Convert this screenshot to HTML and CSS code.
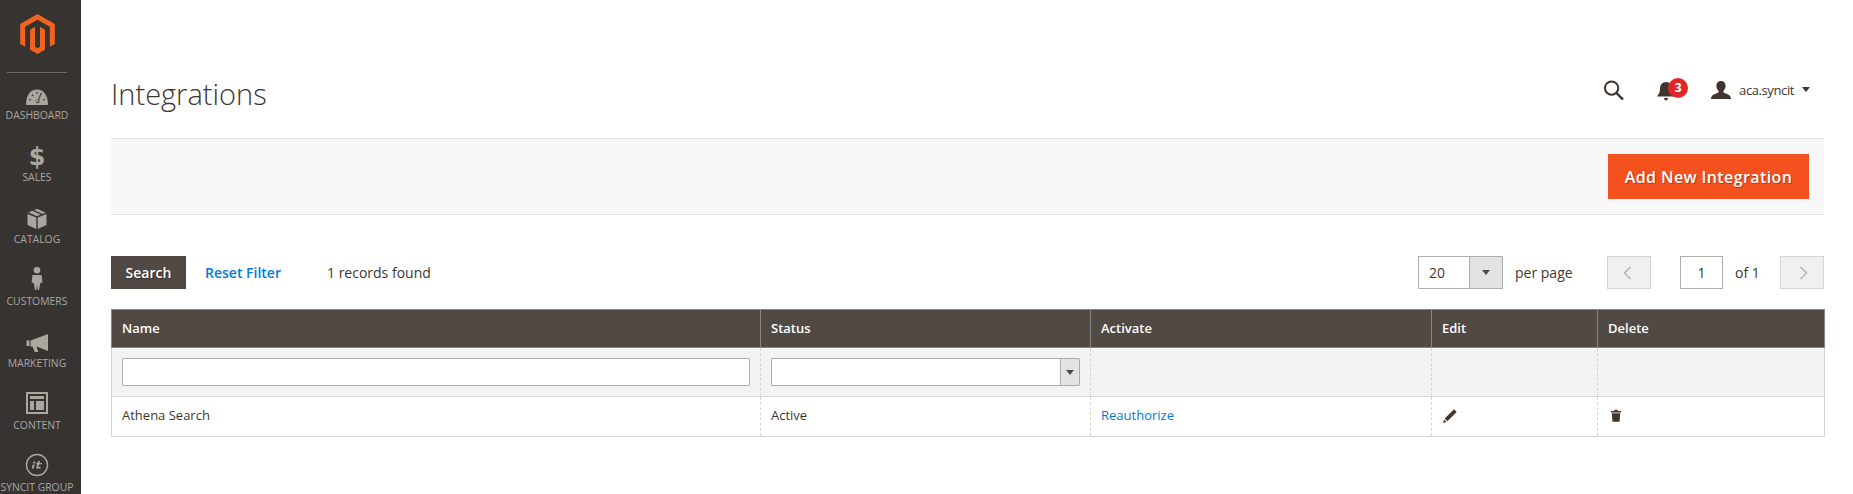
FILE: index.html
```html
<!DOCTYPE html>
<html lang="en">
<head>
<meta charset="utf-8">
<title>Integrations</title>
<link rel="stylesheet" href="styles.css">
</head>
<body>
<div class="app">
  <nav class="sidebar">
    <a class="logo" href="#">
      <svg width="35" height="40" viewBox="1.6 0 20.8 24"><path fill="#f26322" d="M12 24l-4.455-2.572v-12l2.97-1.715v12.001l1.485.902 1.485-.902V7.713l2.971 1.715v12L12 24zM22.391 6v12l-2.969 1.714V7.713L12 3.43 4.574 7.713v12.001L1.609 18V6L12 0l10.391 6z"/></svg>
    </a>
    <ul class="menu">
      <li class="menu-item">
        <svg class="menu-icon" width="24" height="24" viewBox="0 -3.500 24 24"><path fill="#aaa6a0" fill-rule="evenodd" d="M1 19.500C1 11 5.500 5 12 5s11 6 11 14.500c0 .8-.4 1-1 1H2c-.6 0-1-.2-1-1zM4 15.500l2 .5.300-1-2-.6zM6.500 10.500l1.500 1.400.7-.7-1.400-1.500zM11.500 7.500v2h1v-2zM19.800 14.500l-2 .6.300 1 2-.5z"/><path fill="#373330" d="M15.800 8.200l1 .4-2.700 7.200c.7 1 .3 2.300-.6 2.800-1 .5-2.200.2-2.700-.8-.5-1 0-2.200.9-2.600.4-.2.800-.2 1.200-.2z"/><path fill="#aaa6a0" d="M15.600 9.800l-2.500 6c.6.600.5 1.500-.2 1.900-.6.300-1.400.100-1.700-.5-.3-.6 0-1.400.6-1.600.3-.1.500-.1.800 0z"/></svg>
        <span>Dashboard</span>
      </li>
      <li class="menu-item">
        <span class="menu-glyph">$</span>
        <span>Sales</span>
      </li>
      <li class="menu-item">
        <svg class="menu-icon" width="24" height="24" viewBox="0 -1.500 24 24"><path fill="#aaa6a0" d="M2.500 7.500l8.800 3.500v11.500l-8.800-4zM21.500 7.500L12.700 11v11.500l8.800-4zM3.500 6l3.800-1.700 8.500 3.800-3.800 1.700zM9 3.600L12 2.200 20.500 6l-3 1.400z"/></svg>
        <span>Catalog</span>
      </li>
      <li class="menu-item">
        <svg class="menu-icon" width="24" height="24" viewBox="0 1 24 24"><circle cx="12" cy="4.300" r="3.300" fill="#aaa6a0"/><path fill="#aaa6a0" d="M7.500 9h9l1 7.500-2.200.4-1.300 7.100h-1.300l-.7-5-.7 5h-1.300L8.700 16.900l-2.200-.4z"/></svg>
        <span>Customers</span>
      </li>
      <li class="menu-item">
        <svg class="menu-icon" width="24" height="24" viewBox="0 -3 24 24"><path fill="#aaa6a0" d="M1.500 8.500h3v5.500h-3zM5.500 8.500L23 2v17L11.500 14.500l1.800 5.500h-3.600L7.500 14.500h-2z"/></svg>
        <span>Marketing</span>
      </li>
      <li class="menu-item">
        <svg class="menu-icon" width="24" height="24" viewBox="0 0 24 24"><path fill="#aaa6a0" fill-rule="evenodd" d="M1 1h22v22H1zM3 3v18h18V3zM5 5h14v3H5zM5 10h4v9H5zM11 10h8v9h-8z"/></svg>
        <span>Content</span>
      </li>
      <li class="menu-item">
        <svg class="menu-icon" width="24" height="24" viewBox="0 0 24 24"><circle cx="12" cy="12" r="10.500" fill="none" stroke="#aaa6a0" stroke-width="1.400"/><path fill="#aaa6a0" d="M8.500 8.500h2l-.6 2H8zM7.700 11.500h2l-1 4h-2zM13 8h2l-.5 2H17l-.3 1.300h-2.500l-.7 2.700h2.300l-.4 1.500h-4.300l1.100-4.200h-1.300l.3-1.300h1.400z"/></svg>
        <span>Syncit Group</span>
      </li>
    </ul>
  </nav>
  <main class="main">
    <header class="page-head">
      <h1 class="page-title">Integrations</h1>
      <div class="head-tools">
        <svg class="tool-search" width="21" height="20" viewBox="0 0 22 21"><circle cx="9" cy="8.500" r="7" fill="none" stroke="#41362f" stroke-width="2.200"/><path d="M14 13.500l7 7" stroke="#41362f" stroke-width="2.600" fill="none"/></svg>
        <div class="tool-bell">
          <svg width="18" height="20" viewBox="0 0 18 20"><path fill="#41362f" d="M9 1c4 0 6 3 6 7 0 3 1 5 2.500 6.500v1H.5v-1C2 13 3 11 3 8c0-4 2-7 6-7zM7 17h4c0 1.500-.9 2.500-2 2.500S7 18.500 7 17z"/></svg>
          <span class="badge">3</span>
        </div>
        <div class="tool-user">
          <svg width="20" height="18" viewBox="0 0 20 18"><path fill="#41362f" d="M10 0c3 0 4.600 2.300 4.600 5 0 2-.9 3.700-2 4.800-.4.400-.4 1.400.2 1.800 2.200 1.200 7.200 2 7.200 6.400H0c0-4.400 5-5.200 7.200-6.400.6-.4.600-1.400.2-1.800-1.100-1.100-2-2.800-2-4.800C5.400 2.300 7 0 10 0z"/></svg>
          <span class="user-name">aca.syncit</span>
          <span class="caret-user"></span>
        </div>
      </div>
    </header>
    <div class="page-actions">
      <button class="btn-primary" type="button">Add New Integration</button>
    </div>
    <div class="toolbar">
      <div class="toolbar-left">
        <button class="btn-search" type="button">Search</button>
        <a class="link reset" href="#">Reset Filter</a>
        <span class="records">1 records found</span>
      </div>
      <div class="toolbar-right">
        <div class="per-select">
          <span class="per-value">20</span>
          <span class="per-arrow"><span class="caret"></span></span>
        </div>
        <span class="per-label">per page</span>
        <span class="pager-btn pager-prev"><svg width="12" height="20" viewBox="0 0 12 20"><path d="M7.500 4l-6 6 6 6" fill="none" stroke="#b8b3b0" stroke-width="1.500"/></svg></span>
        <span class="pager-input">1</span>
        <span class="pager-of">of 1</span>
        <span class="pager-btn pager-next"><svg width="12" height="20" viewBox="0 0 12 20"><path d="M4.500 4l6 6-6 6" fill="none" stroke="#b8b3b0" stroke-width="1.500"/></svg></span>
      </div>
    </div>
    <table class="grid">
      <colgroup>
        <col class="col-name"><col class="col-status"><col class="col-activate"><col class="col-edit"><col class="col-delete">
      </colgroup>
      <thead>
        <tr><th>Name</th><th>Status</th><th>Activate</th><th>Edit</th><th>Delete</th></tr>
      </thead>
      <tbody>
        <tr class="filters">
          <td><div class="filter-input"></div></td>
          <td><div class="filter-select"><span class="filter-arrow"><span class="caret"></span></span></div></td>
          <td></td><td></td><td></td>
        </tr>
        <tr class="row">
          <td>Athena Search</td>
          <td>Active</td>
          <td><a class="link" href="#">Reauthorize</a></td>
          <td><svg class="row-icon row-edit" width="14" height="14" viewBox="1 1 13 13"><path fill="#41362f" d="M11.200 1.300l2.500 2.500-8.600 8.600-2.500-2.500zM2 10.800l2.200 2.200-3.200 1z"/></svg></td>
          <td><svg class="row-icon row-trash" width="10" height="14" viewBox="0 0 12 15"><path fill="#41362f" d="M4.200 0h3.600l.5 1.500H12v1.800H0V1.500h3.700zM1 4.300h10l-.7 10.200H1.700z"/></svg></td>
        </tr>
      </tbody>
    </table>
  </main>
</div>
</body>
</html>
```
FILE: styles.css
```css
* { box-sizing: border-box; }
html, body { margin: 0; height: 494px; overflow: hidden; background: #fff; }
body { font-family: "Open Sans", "Liberation Sans", sans-serif; font-size: 14px; color: #41362f; }
.app { display: flex; height: 494px; }

.sidebar { flex: 0 0 81px; width: 81px; background: #373330; overflow: hidden; }
.logo { display: flex; justify-content: center; padding: 14px 0 18px; margin: 0 14px 0 7px; border-bottom: 1px solid #736963; height: 73px; }
.logo svg { display: block; }
.menu { list-style: none; margin: 0; padding: 8px 7px 0 0; }
.menu-item { height: 62px; display: flex; flex-direction: column; align-items: center; font-size: 10.4px; line-height: 14px; color: #aaa6a0; text-transform: uppercase; white-space: nowrap; }
.menu-icon { display: block; height: 24px; margin-bottom: 3px; flex: none; overflow: visible; }
.menu-glyph { display: block; height: 24px; margin-bottom: 3px; font-family: "DejaVu Sans", sans-serif; font-weight: 700; font-size: 24px; line-height: 28px; }

.main { flex: 1; min-width: 0; padding: 0 29px 0 30px; }
.page-head { display: flex; justify-content: space-between; align-items: center; height: 138px; padding-top: 53px; padding-bottom: 10px; }
.page-title { margin: 7px 0 0; font-size: 29px; font-weight: 300; line-height: 36px; color: #41362f; }
.head-tools { display: flex; align-items: center; padding-right: 14px; margin-top: -2px; }
.tool-search { display: block; margin-right: 33px; }
.tool-bell { position: relative; width: 18px; height: 20px; margin-right: 36px; margin-top: 3px; }
.tool-bell svg { display: block; }
.badge { position: absolute; left: 11px; top: -3px; width: 20px; height: 20px; border-radius: 50%; background: #e22626; color: #fff; font-size: 12px; font-weight: 700; line-height: 20px; text-align: center; }
.tool-user { display: flex; align-items: center; }
.tool-user svg { display: block; margin-right: 8px; }
.user-name { font-size: 13px; letter-spacing: -0.4px; }
.caret-user { width: 0; height: 0; margin-left: 8px; border-style: solid; border-width: 5px 4px 0; border-color: #41362f transparent transparent; }

.page-actions { display: flex; justify-content: flex-end; align-items: center; height: 77px; padding-right: 15px; background: #f8f8f8; border-top: 1px solid #e3e3e3; border-bottom: 1px solid #e3e3e3; }
.btn-primary { width: 201px; height: 45px; padding: 0; border: 0; background: #f4511e; color: #fff; font-family: inherit; font-size: 16px; font-weight: 600; letter-spacing: 0.4px; text-shadow: 1px 1px 1px rgba(0,0,0,.3); }

.toolbar { display: flex; justify-content: space-between; align-items: flex-start; margin-top: 41px; height: 53px; }
.toolbar-left, .toolbar-right { display: flex; align-items: center; height: 33px; }
.btn-search { width: 75px; height: 33px; padding: 0; border: 0; background: #514943; color: #fff; font-family: inherit; font-size: 14px; font-weight: 600; text-shadow: 1px 1px 1px rgba(0,0,0,.3); }
.link { color: #007bdb; text-decoration: none; }
.reset { margin-left: 19px; font-weight: 600; }
.records { margin-left: 46px; }
.per-select { display: flex; width: 85px; height: 33px; background: #fff; border: 1px solid #adadad; }
.per-value { flex: 1; padding-left: 10px; line-height: 31px; }
.per-arrow, .filter-arrow { display: flex; align-items: center; justify-content: center; background: #e3e3e3; border-left: 1px solid #adadad; }
.per-arrow { width: 33px; }
.caret { width: 0; height: 0; border-style: solid; border-width: 5px 4px 0; border-color: #514943 transparent transparent; }
.per-label { margin-left: 12px; width: 92px; }
.pager-btn { display: flex; align-items: center; justify-content: center; width: 44px; height: 33px; background: #f0f0f0; border: 1px solid #d6d6d6; }
.pager-input { width: 43px; height: 33px; margin-left: 29px; background: #fff; border: 1px solid #adadad; text-align: center; line-height: 31px; }
.pager-of { margin-left: 12px; width: 45px; }

.grid { width: 1713px; table-layout: fixed; border-collapse: collapse; font-size: 13px; }
.col-name { width: 649px; }
.col-status { width: 330px; }
.col-activate { width: 341px; }
.col-edit { width: 166px; }
.col-delete { width: 227px; }
.grid th { height: 38px; padding: 0 10px 1px; background: #514943; color: #fff; font-size: 13px; font-weight: 600; text-align: left; border: 1px solid #8a837f; }
.grid td { padding: 0 10px; border-left: 1px dashed #d6d6d6; border-right: 1px dashed #d6d6d6; border-bottom: 1px solid #d6d6d6; }
.grid td:first-child { border-left: 1px solid #d6d6d6; }
.grid td:last-child { border-right: 1px solid #d6d6d6; }
.filters td { height: 49px; background: #f3f3f3; }
.row td { height: 40px; padding-bottom: 3px; background: #fff; }
.filter-input { height: 28px; background: #fff; border: 1px solid #adadad; border-radius: 1px; }
.filter-select { display: flex; justify-content: flex-end; height: 28px; background: #fff; border: 1px solid #adadad; border-radius: 1px; }
.filter-arrow { width: 19px; }
.row-icon { display: block; margin-top: 2px; }
.row-edit { margin-left: 1px; }
.row-trash { margin-left: 3px; }
```
